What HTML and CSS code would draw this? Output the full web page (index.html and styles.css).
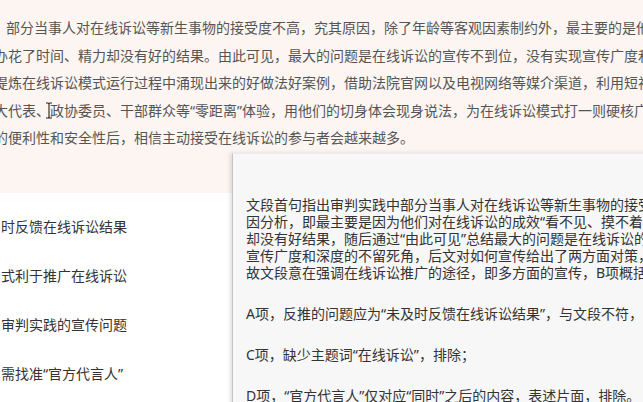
FILE: index.html
```html
<!DOCTYPE html>
<html lang="zh-CN">
<head>
  <meta charset="UTF-8" />
  <meta name="viewport" content="width=device-width, initial-scale=1.0" />
  <title>在线诉讼 解析</title>
  <link rel="stylesheet" href="styles.css">
</head>
<body>
  <div class="page">
    <div class="passage">
      <div class="line first">，部分当事人对在线诉讼等新生事物的接受度不高，究其原因，除了年龄等客观因素制约外，最主要的是他们</div>
      <div class="line">办花了时间、精力却没有好的结果。由此可见，最大的问题是在线诉讼的宣传不到位，没有实现宣传广度和深度</div>
      <div class="line">提炼在线诉讼模式运行过程中涌现出来的好做法好案例，借助法院官网以及电视网络等媒介渠道，利用短视频</div>
      <div class="line">大代表、政协委员、干部群众等“零距离”体验，用他们的切身体会现身说法，为在线诉讼模式打一则硬核广告</div>
      <div class="line">的便利性和安全性后，相信主动接受在线诉讼的参与者会越来越多。</div>
    </div>

    <ul class="options">
      <li>时反馈在线诉讼结果</li>
      <li>式利于推广在线诉讼</li>
      <li>审判实践的宣传问题</li>
      <li>需找准“官方代言人”</li>
    </ul>

    <div class="analysis">
      <p>文段首句指出审判实践中部分当事人对在线诉讼等新生事物的接受度不高，究其原<br>
      因分析，即最主要是因为他们对在线诉讼的成效“看不见、摸不着”，花了时间、精力<br>
      却没有好结果，随后通过“由此可见”总结最大的问题是在线诉讼的宣传不到位，没有实现<br>
      宣传广度和深度的不留死角，后文对如何宣传给出了两方面对策，<br>
      故文段意在强调在线诉讼推广的途径，即多方面的宣传，B项概括正确。</p>
      <p>A项，反推的问题应为“未及时反馈在线诉讼结果”，与文段不符，排除；</p>
      <p>C项，缺少主题词“在线诉讼”，排除；</p>
      <p>D项，“官方代言人”仅对应“同时”之后的内容，表述片面，排除。</p>
    </div>

    <svg class="cursor" width="8" height="17" viewBox="0 0 8 17">
      <path d="M1 1 H3 Q4 1 4 2.5 Q4 1 5 1 H7 M4 2.5 V14.5 M1 16 H3 Q4 16 4 14.5 Q4 16 5 16 H7" fill="none" stroke="#222" stroke-width="1.1"/>
    </svg>
  </div>
</body>
</html>
```

FILE: styles.css
```css
body {
  margin: 0;
  padding: 0;
  background: white;
  font-family: "Noto Sans", "Noto Sans CJK SC", sans-serif;
  font-size: 14px;
}
.page {
  position: relative;
  width: 643px;
  height: 402px;
  overflow: hidden;
}
.passage {
  background-color: #fcf5f2;
  height: 179px;
  padding-top: 14px;
  color: #555;
}
.line {
  margin-left: -6px;
  line-height: 27.5px;
  white-space: nowrap;
}
.line.first {
  margin-left: -8px;
}
.options {
  list-style: none;
  margin: 0;
  padding: 24px 0 0 1px;
  display: flex;
  flex-direction: column;
  gap: 29px;
  color: #333;
}
.options li {
  line-height: 20px;
  white-space: nowrap;
}
.analysis {
  position: absolute;
  left: 232px;
  top: 153px;
  width: 460px;
  height: 280px;
  box-sizing: border-box;
  padding: 42px 0 0 13px;
  background-color: #f7f7f7;
  border-left: 1px solid #c4c4c4;
  border-top: 1px solid #ebebeb;
  box-shadow: -2px 0 4px rgba(0, 0, 0, 0.12);
  color: #333;
  white-space: nowrap;
}
.analysis p {
  margin: 0 0 24px;
  line-height: 17px;
}
.cursor {
  position: absolute;
  left: 45px;
  top: 102px;
}
```
